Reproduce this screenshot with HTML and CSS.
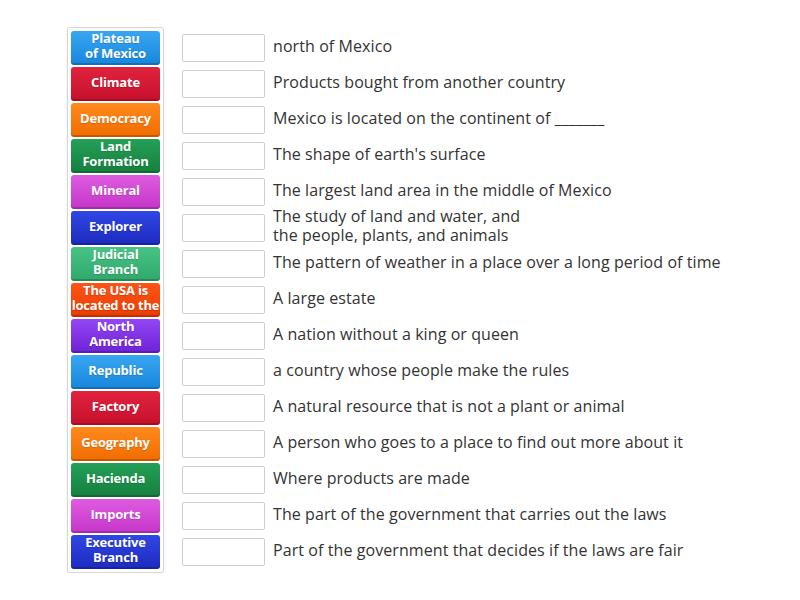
FILE: index.html
```html
<!DOCTYPE html>
<html>
<head>
<meta charset="utf-8">
<link rel="stylesheet" href="styles.css">
</head>
<body>
<div class="game">
  <div class="panel">
    <div class="tile blue">Plateau<br>of Mexico</div>
    <div class="tile red">Climate</div>
    <div class="tile orange">Democracy</div>
    <div class="tile green">Land<br>Formation</div>
    <div class="tile magenta">Mineral</div>
    <div class="tile indigo">Explorer</div>
    <div class="tile teal">Judicial<br>Branch</div>
    <div class="tile redorange">The USA is<br>located to the</div>
    <div class="tile purple">North<br>America</div>
    <div class="tile blue">Republic</div>
    <div class="tile red">Factory</div>
    <div class="tile orange">Geography</div>
    <div class="tile green">Hacienda</div>
    <div class="tile magenta">Imports</div>
    <div class="tile indigo">Executive<br>Branch</div>
  </div>
  <div class="rows">
    <div class="row"><div class="box"></div><div class="clue">north of Mexico</div></div>
    <div class="row"><div class="box"></div><div class="clue">Products bought from another country</div></div>
    <div class="row"><div class="box"></div><div class="clue">Mexico is located on the continent of _______</div></div>
    <div class="row"><div class="box"></div><div class="clue">The shape of earth's surface</div></div>
    <div class="row"><div class="box"></div><div class="clue">The largest land area in the middle of Mexico</div></div>
    <div class="row"><div class="box"></div><div class="clue">The study of land and water, and<br>the people, plants, and animals</div></div>
    <div class="row"><div class="box"></div><div class="clue">The pattern of weather in a place over a long period of time</div></div>
    <div class="row"><div class="box"></div><div class="clue">A large estate</div></div>
    <div class="row"><div class="box"></div><div class="clue">A nation without a king or queen</div></div>
    <div class="row"><div class="box"></div><div class="clue">a country whose people make the rules</div></div>
    <div class="row"><div class="box"></div><div class="clue">A natural resource that is not a plant or animal</div></div>
    <div class="row"><div class="box"></div><div class="clue">A person who goes to a place to find out more about it</div></div>
    <div class="row"><div class="box"></div><div class="clue">Where products are made</div></div>
    <div class="row"><div class="box"></div><div class="clue">The part of the government that carries out the laws</div></div>
    <div class="row"><div class="box"></div><div class="clue">Part of the government that decides if the laws are fair</div></div>
  </div>
</div>
</body>
</html>
```
FILE: styles.css
```css
html, body {
  margin: 0;
  padding: 0;
  background: #ffffff;
  font-family: "Open Sans", "Liberation Sans", sans-serif;
}

.game {
  display: flex;
  align-items: flex-start;
  padding: 27px 0 0 67px;
}

.panel {
  width: 89px;
  padding: 3px;
  border: 1px solid #d6d6d6;
  border-radius: 3px;
  box-shadow: 0 1px 2px rgba(0, 0, 0, 0.12);
  display: flex;
  flex-direction: column;
  gap: 2px;
}

.tile {
  height: 34px;
  box-sizing: border-box;
  padding-bottom: 4px;
  border-radius: 3px;
  color: #ffffff;
  font-weight: 700;
  font-size: 13px;
  line-height: 15px;
  letter-spacing: -0.2px;
  display: flex;
  align-items: center;
  justify-content: center;
  text-align: center;
  white-space: nowrap;
  box-shadow: inset 0 -2px 0 rgba(0, 0, 0, 0.18);
  text-shadow: 0 1px 1px rgba(0, 0, 0, 0.15);
}

.blue { background: linear-gradient(#3aa6f2, #1686dc); }
.red { background: linear-gradient(#e0233f, #c6102c); }
.orange { background: linear-gradient(#ff8a1c, #f06c00); }
.green { background: linear-gradient(#24a058, #157f3e); }
.magenta { background: linear-gradient(#de5ce0, #c535c8); }
.indigo { background: linear-gradient(#3046e4, #1c2bbf); }
.teal { background: linear-gradient(#48c285, #30a86c); }
.redorange { background: linear-gradient(#ff5418, #e83c00); }
.purple { background: linear-gradient(#9446f4, #6c22d6); }

.rows {
  margin-left: 18px;
  padding-top: 4px;
  display: flex;
  flex-direction: column;
  gap: 2px;
}

.row {
  height: 34px;
  display: flex;
  align-items: center;
}

.box {
  width: 81px;
  height: 26px;
  border: 1px solid #cfcfcf;
  border-radius: 2px;
  background: #ffffff;
  flex: none;
}

.clue {
  margin-left: 8px;
  padding-bottom: 4px;
  font-size: 16px;
  line-height: 19px;
  letter-spacing: 0.08px;
  color: #333333;
  white-space: nowrap;
}
```
